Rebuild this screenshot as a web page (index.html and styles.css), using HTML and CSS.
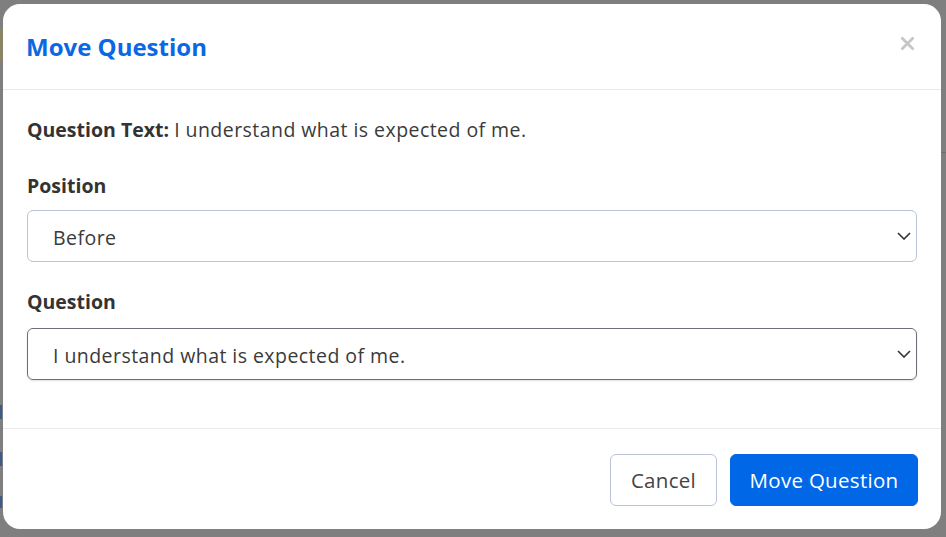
FILE: index.html
```html
<!DOCTYPE html>
<html lang="en">
<head>
<meta charset="utf-8">
<title>Move Question</title>
<link rel="stylesheet" href="styles.css">
</head>
<body>
<div class="page">
  <div class="page-mark mark-yellow"></div>
  <div class="page-mark mark-blue1"></div>
  <div class="page-mark mark-blue2"></div>
  <div class="page-mark mark-blue3"></div>
  <div class="page-mark mark-right"></div>
</div>
<div class="modal" role="dialog" aria-labelledby="modal-title">
  <header class="modal-header">
    <h1 id="modal-title" class="modal-title">Move Question</h1>
    <button class="close-btn" aria-label="Close">
      <svg width="15" height="15" viewBox="0 0 15 15"><path d="M1.5 1.5L13.5 13.5M13.5 1.5L1.5 13.5" stroke="#c6c6c6" stroke-width="2.8" stroke-linecap="butt"/></svg>
    </button>
  </header>
  <section class="modal-body">
    <p class="question-text"><strong>Question Text:</strong> <span class="reg">I understand what is expected of me.</span></p>
    <div class="field">
      <label class="field-label">Position</label>
      <div class="select">
        <span class="select-value">Before</span>
        <svg class="chevron" width="14" height="8" viewBox="0 0 14 8"><path d="M1 1L7 7L13 1" fill="none" stroke="#333" stroke-width="1.6"/></svg>
      </div>
    </div>
    <div class="field field-second">
      <label class="field-label">Question</label>
      <div class="select select-focus">
        <span class="select-value">I understand what is expected of me.</span>
        <svg class="chevron" width="14" height="8" viewBox="0 0 14 8"><path d="M1 1L7 7L13 1" fill="none" stroke="#333" stroke-width="1.6"/></svg>
      </div>
    </div>
  </section>
  <footer class="modal-footer">
    <button class="btn btn-secondary">Cancel</button>
    <button class="btn btn-primary">Move Question</button>
  </footer>
</div>
</body>
</html>
```
FILE: styles.css
```css
* { box-sizing: border-box; }
html, body { margin: 0; padding: 0; }
body {
  width: 946px;
  height: 537px;
  overflow: hidden;
  background: #7f7f7f;
  font-family: "Open Sans", "Liberation Sans", sans-serif;
  color: #333;
  position: relative;
}
.page { position: absolute; inset: 0; }
.page-mark { position: absolute; }
.mark-yellow { left: 0; top: 29px; width: 3px; height: 32px; background: #8a8366; }
.mark-blue1 { left: 0; top: 405px; width: 2px; height: 14px; background: #3d5b8a; }
.mark-blue2 { left: 0; top: 452px; width: 2px; height: 14px; background: #3d5b8a; }
.mark-blue3 { left: 0; top: 496px; width: 2px; height: 12px; background: #3d5b8a; }
.mark-right { left: 941px; top: 152px; width: 5px; height: 1px; background: #6e6e6e; }

.modal {
  position: absolute;
  left: 3px;
  top: 4px;
  width: 938px;
  height: 525px;
  background: #fff;
  border-radius: 17px;
  display: flex;
  flex-direction: column;
  overflow: hidden;
}
.modal-header {
  height: 86px;
  padding: 0 24px;
  display: flex;
  align-items: center;
  justify-content: space-between;
  border-bottom: 1px solid #ebebeb;
}
.modal-title {
  margin: 0 0 0 -1px;
  font-size: 24px;
  font-weight: 700;
  color: #0b67e3;
}
.close-btn {
  border: 0;
  background: none;
  padding: 0;
  margin-right: 2px;
  margin-top: -7px;
  display: flex;
  cursor: pointer;
}
.modal-body {
  padding: 28px 24px 0;
  height: 339px;
  border-bottom: 1px solid #ebebeb;
}
.question-text {
  margin: 0;
  font-size: 19.5px;
  line-height: 24px;
  color: #333;
}
.question-text strong { font-weight: 700; }
.reg { letter-spacing: 0.45px; color: #3a3a3a; }
.field { display: flex; flex-direction: column; gap: 12px; margin-top: 32px; }
.field-second { margin-top: 28px; gap: 14px; }
.field-label {
  font-size: 19.5px;
  line-height: 24px;
  font-weight: 700;
  color: #333;
}
.select {
  height: 52px;
  border: 1px solid #b9c4d6;
  border-radius: 6px;
  display: flex;
  align-items: center;
  justify-content: space-between;
  padding: 0 5px 0 25px;
}
.select-focus { border-color: #6b6f78; box-shadow: 0 1px 2px rgba(0,0,0,0.12); }
.select-value { font-size: 19.5px; letter-spacing: 0.45px; color: #3a3a3a; margin-top: 2px; }
.chevron { margin-top: -1px; }
.modal-footer {
  flex: 1;
  display: flex;
  justify-content: flex-end;
  align-items: center;
  gap: 13px;
  padding: 2px 23px 0 24px;
}
.btn {
  height: 52px;
  border-radius: 6px;
  font-family: inherit;
  font-size: 20.5px;
  letter-spacing: 0.3px;
  cursor: pointer;
}
.btn-secondary {
  width: 107px;
  background: #fff;
  border: 1px solid #b9c4d6;
  color: #444;
}
.btn-primary {
  width: 188px;
  background: #0068e6;
  border: 1px solid #0068e6;
  color: #fff;
}
```
